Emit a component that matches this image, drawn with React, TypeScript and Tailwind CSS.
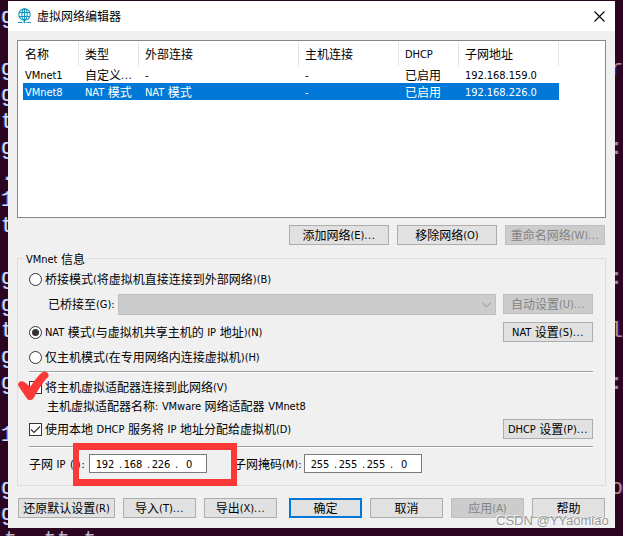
import React from 'react';
import { clsx } from 'clsx';

// one entry per terminal line behind the dialog
const leftLines = ['g', '', 'g', 'g', 't', 'g', '.', '1', 't', '', 'g', 'g', 't', 'g', 'g', '', '1', '', 'g', 'g', ''];
const rightLines = ['', '', 'r', '', '', ':', '', '', '', '', ':', '', 'l', '', ':', '', '', '', 'o', '', ''];

const columns = [
  { label: '名称', width: 'w-[60px]' },
  { label: '类型', width: 'w-[60px]' },
  { label: '外部连接', width: 'w-[160px]' },
  { label: '主机连接', width: 'w-[100px]' },
  { label: 'DHCP', width: 'w-[60px]' },
  { label: '子网地址', width: 'w-[100px]' },
];

const networks = [
  { cells: ['VMnet1', '自定义...', '-', '-', '已启用', '192.168.159.0'], selected: false },
  { cells: ['VMnet8', 'NAT 模式', 'NAT 模式', '-', '已启用', '192.168.226.0'], selected: true },
];

// Latin runs are set slightly smaller than the Chinese ones
function Text({ children, className }: { children: string; className?: string }) {
  const runs = children.split(/([\u4e00-\u9fff]+|\.\.\.)/).filter(Boolean);
  return (
    <span className={clsx('inline-flex items-center whitespace-pre leading-[16px]', className)}>
      {runs.map((run, i) =>
        /[\u4e00-\u9fff]/.test(run) ? (
          <span key={i} className="font-['Noto_Sans_CJK_SC',sans-serif] text-[12px]">{run}</span>
        ) : (
          <span
            key={i}
            className={clsx(
              "translate-y-px font-['DejaVu_Sans_Condensed','DejaVu_Sans',sans-serif] [font-stretch:condensed] text-[11px] [word-spacing:0.5px]",
              run === '...' ? 'tracking-[0.6px]' : 'tracking-[-0.05px]'
            )}
          >
            {run}
          </span>
        )
      )}
    </span>
  );
}

function Button({ label, className, disabled, primary }: { label: string; className: string; disabled?: boolean; primary?: boolean }) {
  return (
    <button
      disabled={disabled}
      className={clsx(
        'h-5 shrink-0 flex items-center justify-center',
        primary ? 'border-2 border-[#0078d7] bg-[#e1e1e1]' : disabled ? 'border border-[#bfbfbf] bg-[#cccccc] text-[#838383]' : 'border border-[#adadad] bg-[#e1e1e1]',
        className
      )}
    >
      <Text>{label}</Text>
    </button>
  );
}

function Radio({ label, checked }: { label: string; checked?: boolean }) {
  return (
    <label className="flex items-center gap-[3px]">
      <span className="w-[13px] h-[13px] rounded-full border border-[#333] bg-white flex items-center justify-center">
        {checked && <span className="w-[7px] h-[7px] rounded-full bg-[#333]" />}
      </span>
      <Text>{label}</Text>
    </label>
  );
}

function Checkbox({ label, checked }: { label: string; checked?: boolean }) {
  return (
    <label className="flex items-center gap-[3px]">
      <span className="w-[13px] h-[13px] border border-[#333] bg-white">
        {checked && (
          <svg viewBox="0 0 11 11" className="w-[11px] h-[11px]" fill="none" stroke="#333" strokeWidth="1.2">
            <path d="M1 5.5 4 8.5 10 2.5" />
          </svg>
        )}
      </span>
      <Text>{label}</Text>
    </label>
  );
}

function IpInput({ parts }: { parts: string[] }) {
  return (
    <div className="w-[118px] h-[19px] border border-[#7a7a7a] bg-white flex items-center pl-[3px]">
      {parts.map((part, i) => (
        <React.Fragment key={i}>
          {i > 0 && <Text className="w-1 pl-[3px] justify-center">.</Text>}
          <Text className="w-6 justify-center">{part}</Text>
        </React.Fragment>
      ))}
    </div>
  );
}

function Divider() {
  return <div className="h-0.5 w-[564px] border-t border-[#a0a0a0] bg-white" />;
}

function TerminalColumn({ lines, className }: { lines: string[]; className: string }) {
  return (
    <div className={clsx("flex flex-col pt-1 font-['Liberation_Mono',monospace] text-[22px] overflow-hidden", className)}>
      {lines.map((line, i) => (
        <span key={i} className="h-[26.15px] shrink-0 leading-[26px]">{line}</span>
      ))}
    </div>
  );
}

export default function App() {
  return (
    <div className="relative w-[623px] h-[536px] overflow-hidden bg-[#2c0620] flex pt-px text-black">
      <TerminalColumn lines={leftLines} className="w-2 pl-px h-[535px] shrink-0 text-[#d5dcf5] [text-shadow:-1px_0_#3554b8]" />

      <div className="w-[607px] h-[527px] shrink-0 bg-[#f0f0f0] flex flex-col">
        <div className="h-[30px] bg-white flex items-center pl-[9px] pr-[10px]">
          <svg width="15" height="16" viewBox="0 0 15 16" fill="none" stroke="#1593b8" strokeWidth="1.1">
            <circle cx="7.5" cy="6.5" r="5.7" />
            <ellipse cx="7.5" cy="6.5" rx="2.6" ry="5.7" />
            <path d="M2 4.5h11M2 8.5h11M7.5 1v13M1 14.5h4.5M9.5 14.5h4.5" />
            <circle cx="7.5" cy="14.2" r="1" fill="#1593b8" stroke="none" />
          </svg>
          <span className="ml-[5px] font-['Noto_Sans_CJK_SC',sans-serif] text-[12px] leading-4">虚拟网络编辑器</span>
          <svg className="ml-auto" width="11" height="11" viewBox="0 0 11 11" stroke="#000" strokeWidth="1.1">
            <path d="M.5.5l10 10M10.5.5l-10 10" />
          </svg>
        </div>

        <div className="mt-[9px] ml-[9px] w-[589px] h-[178px] shrink-0 border border-[#828790] bg-white pl-[1px] pt-px">
          <div className="flex h-6">
            {columns.map((col) => (
              <div key={col.label} className={clsx('border-r border-[#e5e5e5] pl-[6px] flex items-center', col.width)}>
                <Text>{col.label}</Text>
              </div>
            ))}
          </div>
          {networks.map((net) => (
            <div key={net.cells[0]} className={clsx('h-[17px] w-[536px] ml-1 flex items-center', net.selected && 'bg-[#0078d7] text-white')}>
              {net.cells.map((cell, i) => (
                <div key={i} className={clsx('shrink-0 flex', columns[i].width, i === 0 ? 'pl-[2px] -mr-1' : 'pl-[6px]')}>
                  <Text>{cell}</Text>
                </div>
              ))}
            </div>
          ))}
        </div>

        <div className="mt-[7px] flex gap-2 pl-[281px]">
          <Button label="添加网络(E)..." className="w-[100px]" />
          <Button label="移除网络(O)" className="w-[100px]" />
          <Button label="重命名网络(W)..." className="w-[100px]" disabled />
        </div>

        <div className="relative mt-[13px] ml-[9px] w-[589px] h-[228px] shrink-0 border border-[#dcdcdc] pl-[11px] flex flex-col">
          <div className="absolute -top-2 left-[6px] bg-[#f0f0f0] px-[2px] flex">
            <Text>VMnet 信息</Text>
          </div>
          <div className="mt-[12px] h-4 flex items-center">
            <Radio label="桥接模式(将虚拟机直接连接到外部网络)(B)" />
          </div>
          <div className="mt-[7px] h-[21px] flex items-start">
            <Text className="w-[70px] shrink-0 mt-[2px] ml-[19px]">已桥接至(G):</Text>
            <div className="w-[378px] h-[21px] border border-[#bfbfbf] bg-[#cccccc] flex items-center justify-end pr-1">
              <svg width="9" height="6" viewBox="0 0 9 6" fill="none" stroke="#a0a0a0" strokeWidth="1.1">
                <path d="M.5.8l4 4 4-4" />
              </svg>
            </div>
            <Button label="自动设置(U)..." className="w-[90px] ml-[7px]" disabled />
          </div>
          <div className="mt-[7px] h-5 w-[564px] flex items-center justify-between">
            <Radio label="NAT 模式(与虚拟机共享主机的 IP 地址)(N)" checked />
            <Button label="NAT 设置(S)..." className="w-[90px]" />
          </div>
          <div className="mt-[7px] h-4 flex items-center">
            <Radio label="仅主机模式(在专用网络内连接虚拟机)(H)" />
          </div>
          <div className="mt-[6px]"><Divider /></div>
          <div className="mt-[6px] h-4 flex items-center">
            <Checkbox label="将主机虚拟适配器连接到此网络(V)" />
          </div>
          <div className="mt-[3px] h-4 pl-[18px] flex items-center">
            <Text>主机虚拟适配器名称: VMware 网络适配器 VMnet8</Text>
          </div>
          <div className="mt-[5px] h-5 w-[564px] flex items-center justify-between">
            <Checkbox label="使用本地 DHCP 服务将 IP 地址分配给虚拟机(D)" checked />
            <Button label="DHCP 设置(P)..." className="w-[90px]" />
          </div>
          <div className="mt-[7px]"><Divider /></div>
          <div className="mt-[6px] h-[19px] flex items-center">
            <div className="w-[60px] flex shrink-0">
              <Text>子网 IP </Text>
              <Text className="ml-px">(I)</Text>
              <Text className="ml-px">:</Text>
            </div>
            <IpInput parts={['192', '168', '226', '0']} />
            <Text className="w-[70px] ml-[27px]">子网掩码(M):</Text>
            <IpInput parts={['255', '255', '255', '0']} />
          </div>
        </div>

        <div className="mt-3 ml-[10px] flex">
          <Button label="还原默认设置(R)" className="w-[97px]" />
          <Button label="导入(T)..." className="w-[73px] ml-2" />
          <Button label="导出(X)..." className="w-[73px] ml-2" />
          <Button label="确定" className="w-[73px] ml-3" primary />
          <Button label="取消" className="w-[73px] ml-2" />
          <Button label="应用(A)" className="w-[73px] ml-2" disabled />
          <Button label="帮助" className="w-[73px] ml-2" />
        </div>
      </div>

      <TerminalColumn lines={rightLines} className="w-2 h-[535px] shrink-0 text-[#c08d68] [text-shadow:2px_0_#26147a] [direction:rtl]" />
      <div className="absolute left-[4px] top-[528px] h-2 overflow-hidden whitespace-pre font-['Liberation_Mono',monospace] text-[22px] leading-[26px] text-[#b9b4c8]">t  tt t</div>

      {/* hand-drawn marks over the dialog */}
      <div className="absolute left-[73px] top-[443px] w-[164px] h-[43px] border-[7px] border-x-[6px] border-[#fb3838]" />
      <svg className="absolute left-[16px] top-[370px]" width="34" height="32" viewBox="0 0 34 32" fill="#fb3838">
        <path d="M2 15C2 11.500 5 10.500 7 11.500C10 12.500 12 15 14 17C18 11 22 5.500 26 2.500C29 0.500 33.500 3 32.500 6.500C27 12 22 20 18 27.500C16.500 30.500 12.500 31 11 28.500C8 24 4.500 19.500 2 15Z" />
      </svg>
      <div className="absolute left-[496px] top-[513px] font-['Liberation_Sans',sans-serif] text-[13px] leading-4 whitespace-nowrap text-[#999] [text-shadow:-1px_-1px_#ffffffb0]">CSDN @YYaomiao</div>
    </div>
  );
}
